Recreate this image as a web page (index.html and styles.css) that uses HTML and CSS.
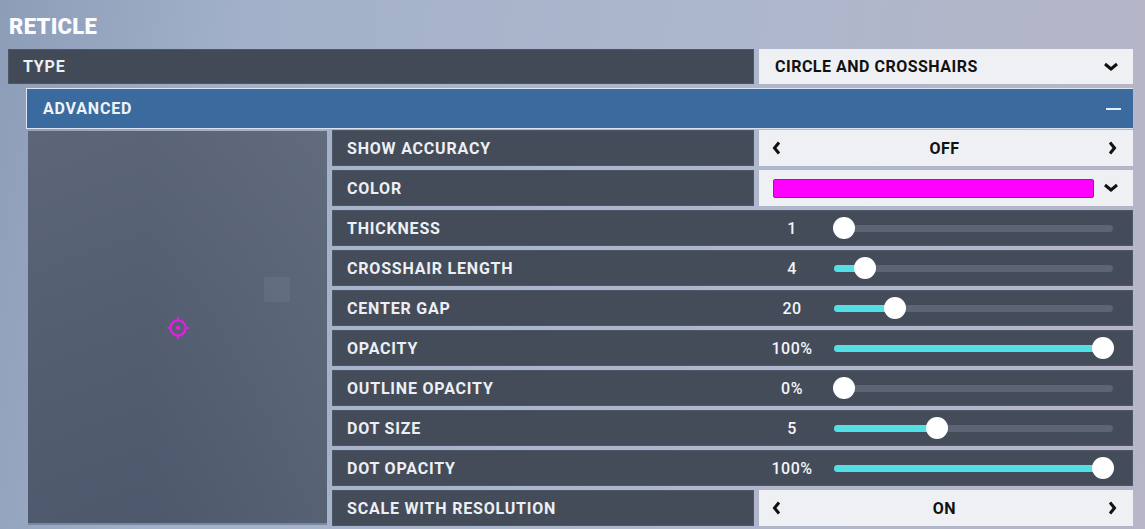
FILE: index.html
```html
<!DOCTYPE html>
<html lang="en">
<head>
    <meta charset="UTF-8">
    <title>Reticle Settings</title>
    <link rel="stylesheet" href="styles.css">
</head>
<body>
    <div class="page">
        <h1 class="page-title">RETICLE</h1>

        <!-- Reticle type -->
        <div class="type-row">
            <div class="bar-label">TYPE</div>
            <div class="dropdown">
                <span>CIRCLE AND CROSSHAIRS</span>
                <svg class="chevron" viewBox="0 0 16 10"><path d="M2 2 L8 7 L14 2" /></svg>
            </div>
        </div>

        <div class="advanced">
            <span>ADVANCED</span>
            <span class="collapse"></span>
        </div>

        <div class="advanced-body">
            <!-- Live preview of the reticle -->
            <div class="preview">
                <span class="preview-square"></span>
                <svg class="reticle" viewBox="0 0 24 24">
                    <circle cx="12" cy="12" r="7" fill="none" stroke="#e31ee3" stroke-width="2" />
                    <circle cx="12" cy="12" r="2" fill="#e31ee3" />
                    <path d="M12 2 V5 M12 19 V22 M2 12 H5 M19 12 H22" stroke="#e31ee3" stroke-width="2" />
                </svg>
            </div>

            <div class="settings">
                <div class="row">
                    <div class="bar-label">SHOW ACCURACY</div>
                    <div class="toggle">
                        <svg class="arrow" viewBox="0 0 9 14"><path d="M7 1.5 L2.5 7 L7 12.5" /></svg>
                        <span>OFF</span>
                        <svg class="arrow" viewBox="0 0 9 14"><path d="M2 1.5 L6.5 7 L2 12.5" /></svg>
                    </div>
                </div>
                <div class="row">
                    <div class="bar-label">COLOR</div>
                    <div class="dropdown color-pick">
                        <span class="swatch"></span>
                        <svg class="chevron" viewBox="0 0 16 10"><path d="M2 2 L8 7 L14 2" /></svg>
                    </div>
                </div>
                <div class="slider-row">
                    <span class="slider-label">THICKNESS</span>
                    <span class="slider-value">1</span>
                    <div class="track"><div class="fill" style="width: 10px"></div><span class="knob" style="left: 10px"></span></div>
                </div>
                <div class="slider-row">
                    <span class="slider-label">CROSSHAIR LENGTH</span>
                    <span class="slider-value">4</span>
                    <div class="track"><div class="fill" style="width: 31px"></div><span class="knob" style="left: 31px"></span></div>
                </div>
                <div class="slider-row">
                    <span class="slider-label">CENTER GAP</span>
                    <span class="slider-value">20</span>
                    <div class="track"><div class="fill" style="width: 61px"></div><span class="knob" style="left: 61px"></span></div>
                </div>
                <div class="slider-row">
                    <span class="slider-label">OPACITY</span>
                    <span class="slider-value">100%</span>
                    <div class="track"><div class="fill" style="width: 269px"></div><span class="knob" style="left: 269px"></span></div>
                </div>
                <div class="slider-row">
                    <span class="slider-label">OUTLINE OPACITY</span>
                    <span class="slider-value">0%</span>
                    <div class="track"><div class="fill" style="width: 10px"></div><span class="knob" style="left: 10px"></span></div>
                </div>
                <div class="slider-row">
                    <span class="slider-label">DOT SIZE</span>
                    <span class="slider-value">5</span>
                    <div class="track"><div class="fill" style="width: 103px"></div><span class="knob" style="left: 103px"></span></div>
                </div>
                <div class="slider-row">
                    <span class="slider-label">DOT OPACITY</span>
                    <span class="slider-value">100%</span>
                    <div class="track"><div class="fill" style="width: 269px"></div><span class="knob" style="left: 269px"></span></div>
                </div>
                <div class="row">
                    <div class="bar-label">SCALE WITH RESOLUTION</div>
                    <div class="toggle">
                        <svg class="arrow" viewBox="0 0 9 14"><path d="M7 1.5 L2.5 7 L7 12.5" /></svg>
                        <span>ON</span>
                        <svg class="arrow" viewBox="0 0 9 14"><path d="M2 1.5 L6.5 7 L2 12.5" /></svg>
                    </div>
                </div>
            </div>
        </div>
    </div>
</body>
</html>
```

FILE: styles.css
```css
body {
    margin: 0;
    font-family: Roboto, "Liberation Sans", sans-serif;
    background: linear-gradient(100deg, #8d9db8 0%, #a2b1c9 20%, #adb7cc 60%, #b7b5c7 100%);
    height: 529px;
    overflow: hidden;
}
.page {
    padding: 0 12px 0 8px;
}
.page-title {
    margin: 0;
    padding: 15px 0 10px 1px;
    font-size: 22px;
    font-weight: 900;
    line-height: 24px;
    color: #fbfcfe;
    letter-spacing: 0.3px;
}
.bar-label {
    flex: 1;
    display: flex;
    align-items: center;
    padding-left: 14px;
    background: #444c5a;
    border: 1px solid #4e5767;
    color: #eceff4;
    font-size: 16px;
    font-weight: 700;
    letter-spacing: 0.8px;
}
.type-row {
    display: flex;
    gap: 5px;
    height: 35px;
}
.type-row .bar-label {
    background: #424a57;
}
.dropdown {
    width: 374px;
    box-sizing: border-box;
    display: flex;
    align-items: center;
    justify-content: space-between;
    padding: 0 14px 0 16px;
    background: #eef0f4;
    color: #111;
    font-size: 16px;
    font-weight: 700;
    letter-spacing: 0.5px;
}
.chevron {
    width: 16px;
    height: 10px;
    fill: none;
    stroke: #111;
    stroke-width: 3;
}
.advanced {
    margin: 4px 0 0 18px;
    height: 41px;
    box-sizing: border-box;
    display: flex;
    align-items: center;
    justify-content: space-between;
    padding: 0 12px 0 16px;
    background: #3b6b9e;
    border: 1px solid #dbe4ef;
    border-right: none;
    color: #eef3f8;
    font-size: 16px;
    font-weight: 700;
    letter-spacing: 0.8px;
}
.collapse {
    width: 15px;
    height: 2px;
    background: #e6ecf3;
}
.advanced-body {
    display: flex;
    gap: 5px;
    margin: 2px 0 0 20px;
}
.preview {
    position: relative;
    width: 299px;
    height: 394px;
    flex-shrink: 0;
    background: linear-gradient(160deg, #5c6678 0%, #535e71 45%, #4b566a 100%);
    border-bottom: 2px solid #7888a0;
    box-sizing: border-box;
}
.preview::after {
    content: "";
    position: absolute;
    inset: 0;
    background: linear-gradient(90deg, rgba(255,255,255,0) 40%, rgba(140,150,165,0.18) 100%);
}
.preview-square {
    position: absolute;
    left: 236px;
    top: 146px;
    width: 26px;
    height: 25px;
    background: rgba(120, 132, 148, 0.25);
}
.reticle {
    position: absolute;
    left: 137px;
    top: 184px;
    width: 26px;
    height: 26px;
    z-index: 1;
}
.settings {
    flex: 1;
    display: flex;
    flex-direction: column;
    gap: 4px;
    margin-top: -1px;
}
.row {
    display: flex;
    gap: 5px;
    height: 36px;
}
.toggle {
    width: 374px;
    box-sizing: border-box;
    display: flex;
    align-items: center;
    justify-content: space-between;
    padding: 0 16px 0 13px;
    background: #eef0f4;
    color: #111;
    font-size: 16px;
    font-weight: 700;
    letter-spacing: 0.5px;
}
.arrow {
    width: 9px;
    height: 14px;
    fill: none;
    stroke: #111;
    stroke-width: 3;
}
.color-pick {
    padding: 0 14px 0 14px;
}
.swatch {
    width: 321px;
    height: 19px;
    box-sizing: border-box;
    background: #ff00ff;
    border: 1px solid #9a1a8f;
    border-radius: 2px;
}
.slider-row {
    display: flex;
    align-items: center;
    height: 36px;
    box-sizing: border-box;
    padding: 0 19px 0 14px;
    background: #444c5a;
    border: 1px solid #4e5767;
}
.slider-label {
    flex: 1;
    color: #eceff4;
    font-size: 16px;
    font-weight: 700;
    letter-spacing: 0.8px;
}
.slider-value {
    width: 60px;
    text-align: center;
    color: #f2f4f7;
    font-size: 16px;
    font-weight: 500;
    letter-spacing: 0.5px;
}
.track {
    position: relative;
    width: 279px;
    height: 7px;
    margin-left: 12px;
    border-radius: 4px;
    background: #5d6473;
}
.fill {
    height: 100%;
    border-radius: 4px;
    background: #52e0e4;
}
.knob {
    position: absolute;
    top: 50%;
    width: 22px;
    height: 22px;
    margin: -11px 0 0 -11px;
    border-radius: 50%;
    background: #ffffff;
}
```
